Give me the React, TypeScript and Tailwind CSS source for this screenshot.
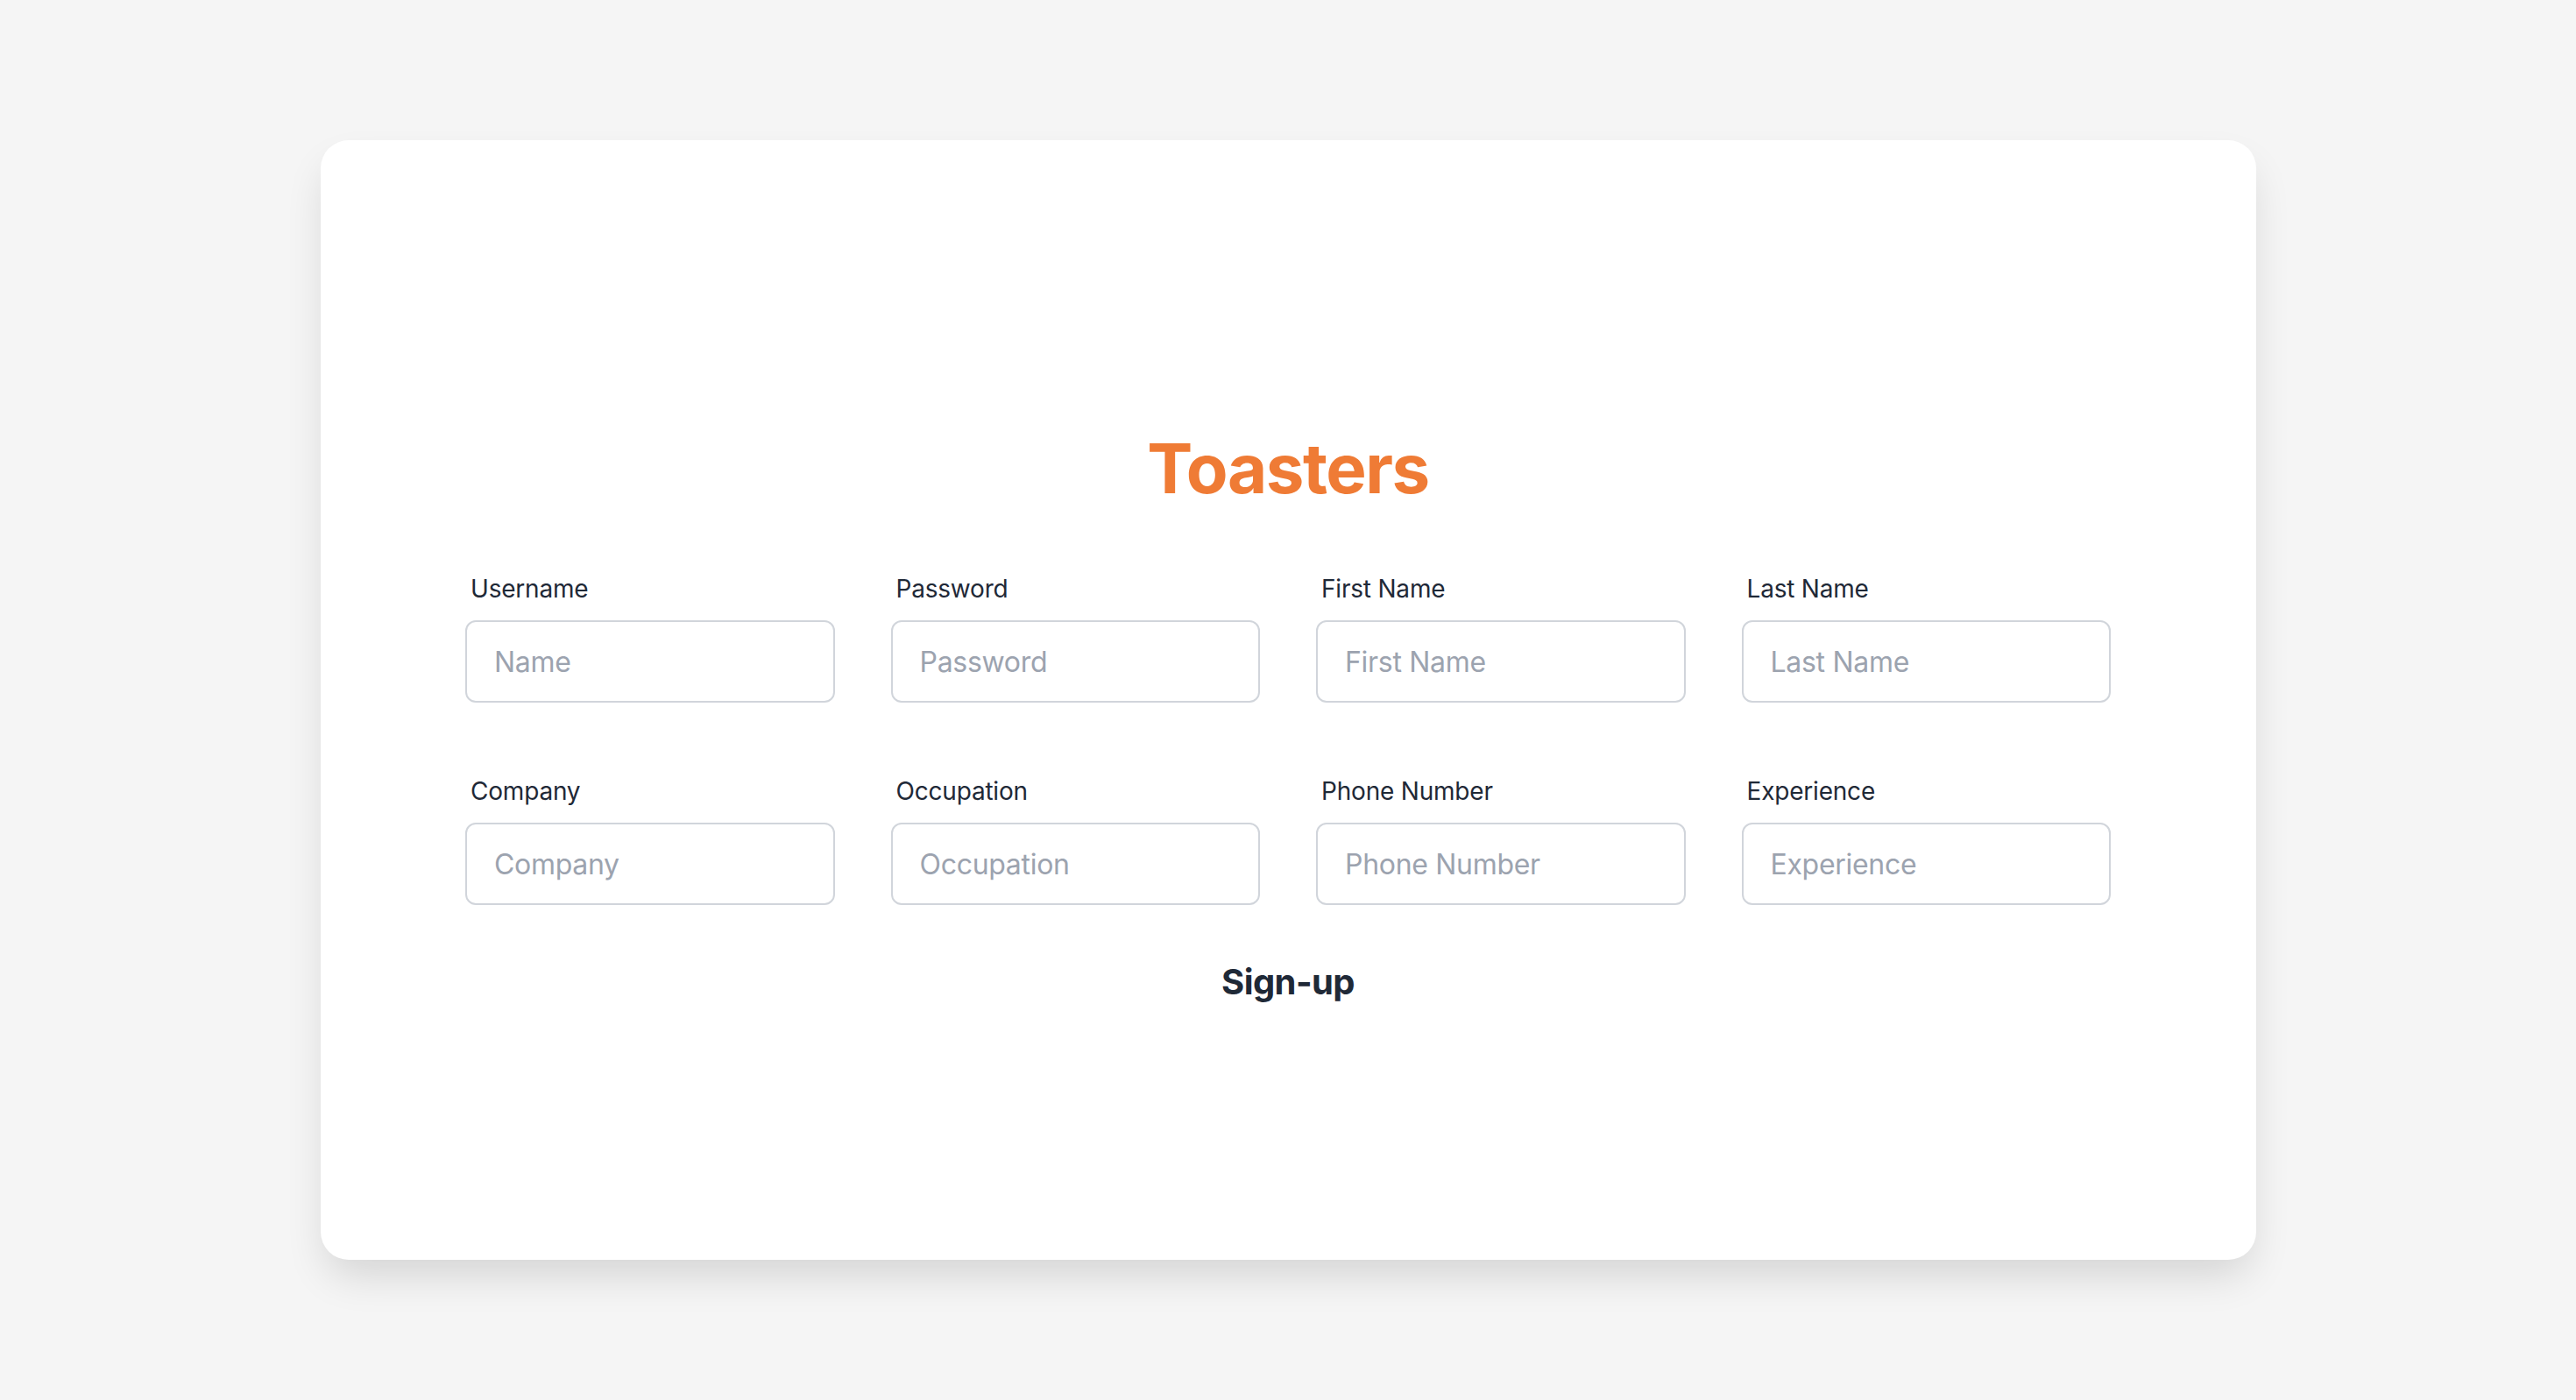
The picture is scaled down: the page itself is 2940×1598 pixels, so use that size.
import React from "react";

const fields: { label: string; placeholder: string }[] = [
  { label: "Username", placeholder: "Name" },
  { label: "Password", placeholder: "Password" },
  { label: "First Name", placeholder: "First Name" },
  { label: "Last Name", placeholder: "Last Name" },
  { label: "Company", placeholder: "Company" },
  { label: "Occupation", placeholder: "Occupation" },
  { label: "Phone Number", placeholder: "Phone Number" },
  { label: "Experience", placeholder: "Experience" },
];

export default function App() {
  return (
    <div
      className="w-full h-[1598px] bg-[#f5f5f5] flex items-center justify-center"
      style={{ fontFamily: "Inter, 'Noto Sans', 'Liberation Sans', sans-serif" }}
    >
      <div className="w-[2209px] h-[1278px] bg-white rounded-[32px] shadow-[0_24px_48px_-8px_rgba(0,0,0,0.14)] flex flex-col items-center pt-[336px]">
        <h1 className="text-[78px] leading-[78px] font-bold text-[#ef7b35] tracking-[-1.5px]">
          Toasters
        </h1>
        <div className="w-[1878px] grid grid-cols-4 gap-x-[64px] gap-y-[81px] mt-[78px]">
          {fields.map((f) => (
            <div key={f.label} className="flex flex-col">
              <label className="text-[28px] leading-[40px] text-[#1f2937] pl-[6px] mb-[16px] tracking-[-0.2px]">
                {f.label}
              </label>
              <input
                type="text"
                placeholder={f.placeholder}
                className="h-[94px] w-full border-2 border-[#d1d5db] rounded-[12px] pl-[31px] text-[32px] tracking-[-0.3px] text-[#1f2937] placeholder:text-[#9ca3af] outline-none bg-white"
              />
            </div>
          ))}
        </div>
        <button className="mt-[60px] text-[40px] leading-[56px] font-bold text-[#1f2937] bg-transparent tracking-[-0.6px]">
          Sign-up
        </button>
      </div>
    </div>
  );
}
